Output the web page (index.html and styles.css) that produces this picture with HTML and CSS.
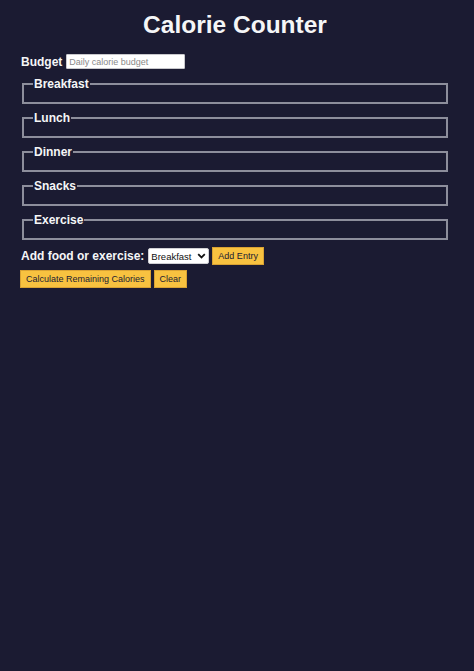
FILE: index.html
```html
<!DOCTYPE html>
<html lang="en">
<head>
<meta charset="utf-8">
<title>Calorie Counter</title>
<link rel="stylesheet" href="styles.css">
</head>
<body>
<main class="page">
  <h1 class="title">Calorie Counter</h1>
  <form class="form" id="calorie-counter">
    <div class="budget-row">
      <label class="label" for="budget">Budget</label>
      <input class="budget-input" type="number" min="0" id="budget" placeholder="Daily calorie budget">
    </div>
    <fieldset class="meal">
      <legend class="meal-legend">Breakfast</legend>
      <div class="input-container"></div>
    </fieldset>
    <fieldset class="meal">
      <legend class="meal-legend">Lunch</legend>
      <div class="input-container"></div>
    </fieldset>
    <fieldset class="meal">
      <legend class="meal-legend">Dinner</legend>
      <div class="input-container"></div>
    </fieldset>
    <fieldset class="meal">
      <legend class="meal-legend">Snacks</legend>
      <div class="input-container"></div>
    </fieldset>
    <fieldset class="meal">
      <legend class="meal-legend">Exercise</legend>
      <div class="input-container"></div>
    </fieldset>
    <div class="controls">
      <label class="label" for="entry-dropdown">Add food or exercise:</label>
      <span class="select-wrap">
        <select class="select" id="entry-dropdown" name="options">
          <option value="breakfast" selected>Breakfast</option>
          <option value="lunch">Lunch</option>
          <option value="dinner">Dinner</option>
          <option value="snacks">Snacks</option>
          <option value="exercise">Exercise</option>
        </select>
        <svg class="chevron" width="9" height="6" viewBox="0 0 9 6"><path d="M1.2 1.2 L4.5 4.4 L7.8 1.2" fill="none" stroke="#111" stroke-width="1.8"/></svg>
      </span>
      <button class="btn" type="button">Add Entry</button>
    </div>
    <div class="actions">
      <button class="btn" type="submit">Calculate Remaining Calories</button>
      <button class="btn" type="button">Clear</button>
    </div>
  </form>
</main>
</body>
</html>
```

FILE: styles.css
```css
html, body {
  margin: 0;
  padding: 0;
}
body {
  background-color: #1b1b32;
  color: #f5f6f7;
  font-family: "Liberation Sans", Arial, sans-serif;
  font-size: 12px;
  min-height: 671px;
}
.page {
  display: block;
}
.title {
  margin: 11px 0 0;
  font-size: 24.5px;
  font-weight: 700;
  text-align: center;
  line-height: 28px;
  padding-right: 4px;
}
.form {
  margin: 15px 26px 0 21px;
  display: flex;
  flex-direction: column;
}
.budget-row {
  display: flex;
  align-items: center;
  gap: 4px;
}
.label {
  font-weight: 700;
  font-size: 12px;
  line-height: 14px;
}
.budget-input {
  box-sizing: border-box;
  width: 119px;
  height: 15px;
  border: 1px solid #c8c8cc;
  border-radius: 1px;
  background: #fff;
  font-family: "Liberation Sans", Arial, sans-serif;
  font-size: 9px;
  padding: 0 2px;
  margin: 0;
  -moz-appearance: textfield;
  appearance: textfield;
}
.budget-input::placeholder {
  color: #8a8a8a;
}
.meal {
  margin: 8px 0 0 1px;
  padding: 0 9px;
  border: 2px solid #8d8e9c;
  border-radius: 0;
  min-width: 0;
}
.meal + .meal {
  margin-top: 7px;
}
.meal-legend {
  padding: 0 1px;
  font-weight: 700;
  font-size: 12px;
  line-height: 14px;
}
.input-container {
  height: 11px;
}
.controls {
  margin-top: 7px;
  display: flex;
  align-items: center;
  gap: 3px;
}
.controls .label {
  margin-right: 1px;
}
.select-wrap {
  display: inline-flex;
  align-items: center;
  box-sizing: border-box;
  width: 61px;
  height: 16px;
  background: #fff;
  border: 1px solid #d0d0d4;
  border-radius: 2px;
}
.select {
  appearance: none;
  -webkit-appearance: none;
  border: 0;
  background: transparent;
  font-family: "Liberation Sans", Arial, sans-serif;
  font-size: 9.5px;
  color: #111;
  padding: 0 0 0 2px;
  margin: 0;
  width: 47px;
  height: 14px;
  outline: none;
}
.chevron {
  margin-left: 1px;
}
.btn {
  box-sizing: border-box;
  height: 18px;
  padding: 0 5px;
  margin: 0;
  background-color: #f8c240;
  border: 1px solid #d9a233;
  border-radius: 0;
  color: #1b1b32;
  font-family: "Liberation Sans", Arial, sans-serif;
  font-size: 9px;
  line-height: 14px;
  cursor: pointer;
}
.actions {
  margin-top: 5px;
  margin-left: -1px;
  display: flex;
  gap: 3px;
}
```
